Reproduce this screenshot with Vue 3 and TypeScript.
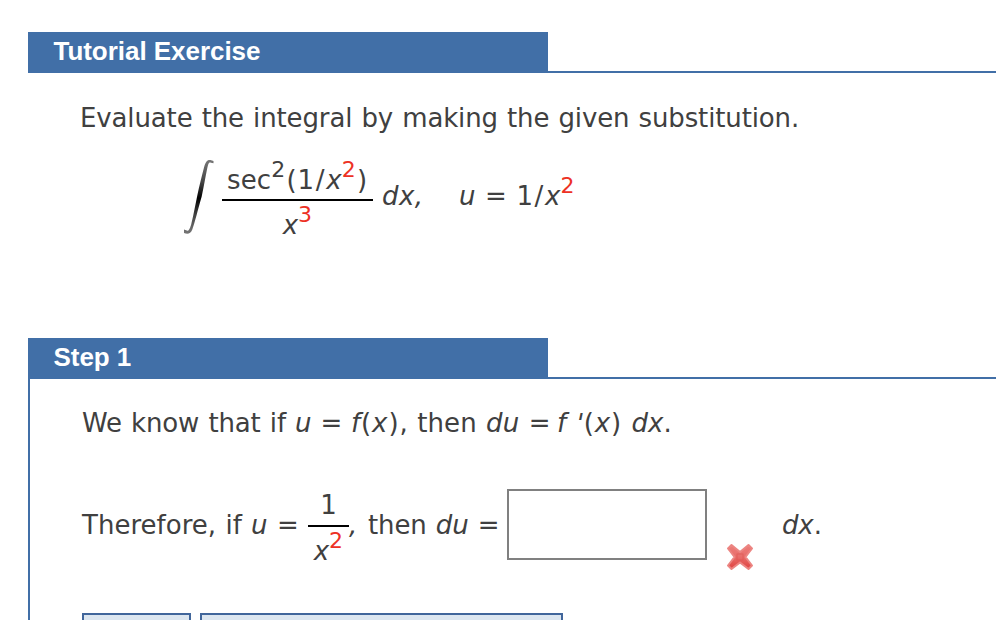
<script setup lang="ts">
import { ref } from 'vue';

const answer = ref('');
</script>

<template>
  <main class="page">
    <section class="panel exercise">
      <header class="panel-head"><h2 class="panel-title">Tutorial Exercise</h2></header>
      <div class="panel-body">
        <p class="prompt">Evaluate the integral by making the given substitution.</p>
        <div class="math">
          <svg class="integral" width="32" height="76" viewBox="0 0 32 76" aria-label="integral">
            <defs>
              <linearGradient id="stroke" x1="0" y1="0" x2="0" y2="1">
                <stop offset="0" stop-color="#777" />
                <stop offset="0.3" stop-color="#444" />
                <stop offset="0.52" stop-color="#000" />
                <stop offset="0.75" stop-color="#444" />
                <stop offset="1" stop-color="#777" />
              </linearGradient>
            </defs>
            <path
              fill="url(#stroke)"
              d="M30.500 4.200 L30.500 2 L27.500 1 C24 0.500 22.500 3 21 8.500 C18.500 18 16.500 26 14.300 36.500 C12.300 46 10.500 56 8.500 64 C7.500 68.500 6 71.800 4.500 71.800 L1 70.500 L1 74 C4 75 7.500 75.500 9.300 70.500 C12 63 14.500 52 18.700 37.500 C20.800 28 22.300 18 24.200 9.500 C25.500 4 26 3 28 3.800 Z"
            />
          </svg>
          <div class="fraction main-fraction">
            <div class="top">sec<sup>2</sup><span class="paren">(</span>1<span class="slash">/</span><i>x</i><sup class="red">2</sup><span class="paren">)</span></div>
            <div class="bottom"><i>x</i><sup class="red">3</sup></div>
          </div>
          <span class="differential"><i>dx,</i></span>
          <span class="substitution"><i>u</i> = 1<span class="slash">/</span><i>x</i><sup class="red">2</sup></span>
        </div>
      </div>
    </section>

    <section class="panel step">
      <header class="panel-head"><h2 class="panel-title">Step 1</h2></header>
      <div class="panel-body">
        <p class="rule">
          <span class="rule-if">We know that if <i>u</i> =</span>
          <span class="rule-then"><i>f</i><span class="paren">(</span><i>x</i><span class="paren">)</span>, then <i>du</i> =</span>
          <span class="rule-result"><i>f</i> <i class="prime">'</i><span class="paren">(</span><i>x</i><span class="paren">)</span> <i>dx</i>.</span>
        </p>
        <div class="answer-row">
          <span class="lead">Therefore, if <i>u</i> =</span>
          <div class="fraction small-fraction">
            <div class="top">1</div>
            <div class="bottom"><i>x</i><sup class="red">2</sup></div>
          </div>
          <span class="comma"><i>,</i></span>
          <span class="then">then <i>du</i> =</span>
          <input v-model="answer" class="answer" type="text" spellcheck="false" aria-label="du" />
          <svg class="wrong" width="30" height="30" viewBox="0 0 30 30" aria-label="incorrect">
            <defs>
              <linearGradient id="cross" x1="0" y1="0" x2="0" y2="1">
                <stop offset="0" stop-color="#ec7d7a" />
                <stop offset="0.5" stop-color="#e86d6a" />
                <stop offset="1" stop-color="#df403e" />
              </linearGradient>
            </defs>
            <path
              d="M6.500 3 L15 10 L23.500 3 L27 6.500 L20.500 15 L27 23.500 L23.500 27 L15 20.500 L6.500 27 L3 23.500 L9.500 15 L3 6.500 Z"
              fill="url(#cross)"
              stroke="#ec8582"
              stroke-width="2"
              stroke-linejoin="round"
            />
            <rect x="12" y="12" width="6" height="6" fill="none" stroke="#dc5452" opacity="0.6" />
          </svg>
          <span class="tail"><i>dx</i>.</span>
        </div>
        <div class="buttons">
          <button class="btn btn-short" type="button"></button>
          <button class="btn btn-long" type="button"></button>
        </div>
      </div>
    </section>
  </main>
</template>

<style>
body {
  margin: 0;
  background: #fff;
  overflow: hidden;
}
</style>

<style scoped>
.page {
  box-sizing: border-box;
  width: 996px;
  height: 620px;
  padding: 32px 0 0 28px;
  overflow: hidden;
  color: #404040;
  font-family: Verdana, 'DejaVu Sans', sans-serif;
  font-size: 26px;
  line-height: 32px;
  letter-spacing: -0.13px;
  word-spacing: 1px;
  white-space: nowrap;
}

.panel-head {
  display: flex;
  box-sizing: border-box;
  height: 41px;
  border-bottom: 2px solid #416fa7;
}

.panel-title {
  box-sizing: border-box;
  width: 520px;
  height: 39px;
  margin: 0;
  padding-left: 25.5px;
  background: #416fa7;
  color: #fff;
  font-family: Arial, 'Liberation Sans', sans-serif;
  font-size: 26px;
  font-weight: bold;
  line-height: 39px;
  letter-spacing: -0.04px;
  word-spacing: 0;
}

.exercise {
  height: 306px;
}

.exercise .panel-body {
  padding: 29px 0 0 52px;
}

.prompt,
.rule {
  margin: 0;
}

sup {
  font-size: 22px;
  line-height: 0;
  letter-spacing: 0.4px;
  vertical-align: 12.5px;
}

.red {
  color: #ed3124;
}

.paren {
  padding: 0 0.8px;
}

.slash {
  padding: 0 1.5px;
}

.prime {
  display: inline-block;
  transform: skewX(-12deg);
}

.math {
  display: flex;
  align-items: flex-start;
  height: 76px;
  margin: 25px 0 0 103px;
}

.fraction {
  display: flex;
  flex-direction: column;
  text-align: center;
}

.fraction .top {
  border-bottom: 2px solid #000;
}

.main-fraction {
  width: 151px;
  margin-left: 7px;
}

.main-fraction .top {
  height: 35px;
  padding-top: 5px;
  letter-spacing: 0.15px;
}

.main-fraction .bottom {
  padding-top: 8px;
}

.differential {
  width: 78px;
  padding: 21px 0 0 9px;
  box-sizing: border-box;
  letter-spacing: 0.4px;
}

.substitution {
  padding: 21px 0 0 8px;
  letter-spacing: 0.15px;
}

.step .panel-body {
  height: 241px;
  padding: 28px 0 0 52px;
  border-left: 2px solid #416fa7;
}

.rule {
  display: flex;
}

.rule-if {
  width: 269px;
}

.rule-then {
  width: 206px;
  letter-spacing: 0.1px;
}

.rule-result {
  letter-spacing: 0.1px;
}

.answer-row {
  display: flex;
  align-items: flex-start;
  height: 82px;
  margin-top: 50px;
}

.lead {
  width: 226px;
  padding-top: 20px;
  letter-spacing: 0.02px;
}

.small-fraction {
  width: 41px;
}

.small-fraction .top {
  height: 36px;
}

.small-fraction .bottom {
  padding-top: 8px;
}

.comma {
  width: 19px;
  padding-top: 20px;
}

.then {
  width: 139px;
  padding-top: 20px;
}

.answer {
  box-sizing: border-box;
  width: 200px;
  height: 71px;
  padding: 4px 8px;
  border: 2px solid #808080;
  border-radius: 0;
  outline: none;
  background: #fff;
  color: #404040;
  font: inherit;
}

.wrong {
  margin: 53px 0 0 18px;
}

.tail {
  margin-left: 27px;
  padding-top: 20px;
}

.buttons {
  display: flex;
  gap: 9px;
  margin-top: 42px;
}

.btn {
  box-sizing: border-box;
  height: 44px;
  padding: 0;
  border: 2px solid #41669b;
  border-radius: 0;
  background: #dce6f0;
}

.btn-short {
  width: 109px;
}

.btn-long {
  width: 363px;
}
</style>
